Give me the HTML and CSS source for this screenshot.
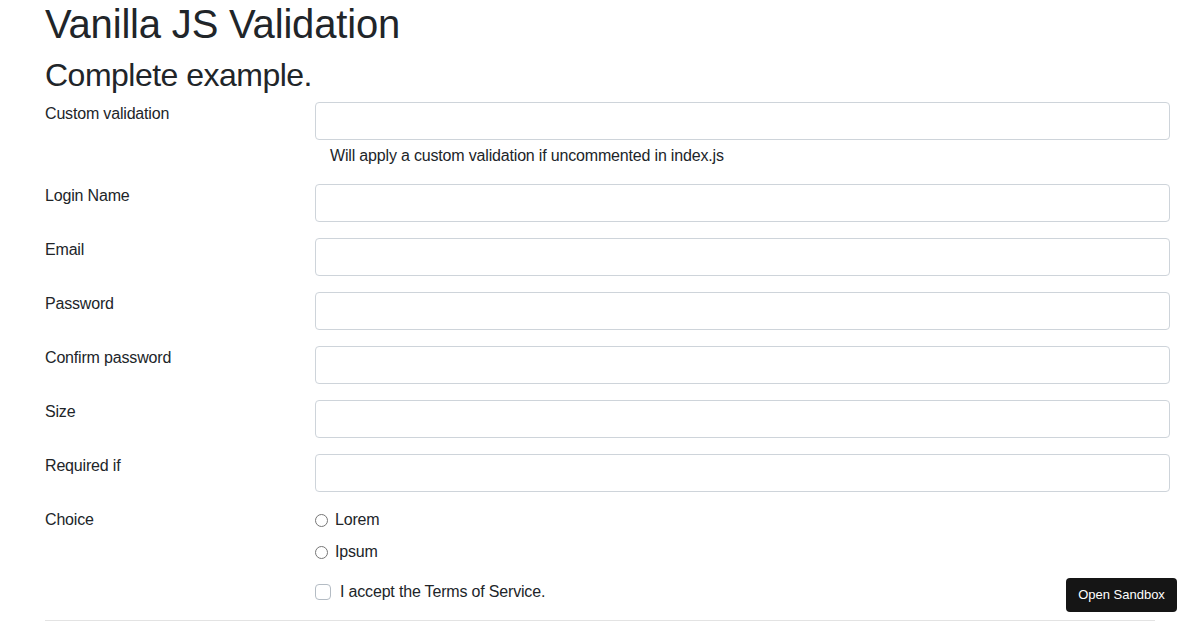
FILE: index.html
```html
<!DOCTYPE html>
<html lang="en">
<head>
<meta charset="utf-8">
<title>Vanilla JS Validation</title>
<link rel="stylesheet" href="styles.css">
</head>
<body>
<div class="container">
  <h1 class="title">Vanilla JS Validation</h1>
  <h2 class="subtitle">Complete example.</h2>
  <form class="form">
    <div class="row">
      <label class="label" for="custom">Custom validation</label>
      <div class="field">
        <input class="input" id="custom" type="text">
        <div class="help">Will apply a custom validation if uncommented in index.js</div>
      </div>
    </div>
    <div class="row">
      <label class="label" for="login">Login Name</label>
      <div class="field"><input class="input" id="login" type="text"></div>
    </div>
    <div class="row">
      <label class="label" for="email">Email</label>
      <div class="field"><input class="input" id="email" type="text"></div>
    </div>
    <div class="row">
      <label class="label" for="password">Password</label>
      <div class="field"><input class="input" id="password" type="password"></div>
    </div>
    <div class="row">
      <label class="label" for="confirm">Confirm password</label>
      <div class="field"><input class="input" id="confirm" type="password"></div>
    </div>
    <div class="row">
      <label class="label" for="size">Size</label>
      <div class="field"><input class="input" id="size" type="text"></div>
    </div>
    <div class="row">
      <label class="label" for="reqif">Required if</label>
      <div class="field"><input class="input" id="reqif" type="text"></div>
    </div>
    <div class="row">
      <div class="label">Choice</div>
      <div class="field choices">
        <label class="radio-line"><input class="radio" type="radio" name="choice"><span>Lorem</span></label>
        <label class="radio-line"><input class="radio" type="radio" name="choice"><span>Ipsum</span></label>
      </div>
    </div>
    <div class="row">
      <div class="label"></div>
      <div class="field">
        <label class="check-line"><input class="check" type="checkbox"><span>I accept the Terms of Service.</span></label>
      </div>
    </div>
  </form>
  <hr class="rule">
</div>
<button class="sandbox" type="button">Open Sandbox</button>
</body>
</html>
```
FILE: styles.css
```css
* { box-sizing: border-box; }
html, body { margin: 0; padding: 0; background: #fff; }
body {
  font-family: "Liberation Sans", Arial, sans-serif;
  font-size: 16px;
  line-height: 24px;
  color: #212529;
  letter-spacing: -0.011em;
}
.container {
  width: 1110px;
  margin: 0 auto;
}
.title {
  font-size: 40px;
  font-weight: 400;
  line-height: 48px;
  margin: 0 0 8px;
}
.subtitle {
  font-size: 32px;
  font-weight: 400;
  line-height: 38px;
  margin: 0 0 8px;
  letter-spacing: -0.016em;
}
.form { margin-right: -15px; }
.row {
  display: grid;
  grid-template-columns: 270px 1fr;
  margin-bottom: 16px;
}
.label { line-height: 24px; }
.input {
  display: block;
  width: 100%;
  height: 38px;
  border: 1px solid #ced4da;
  border-radius: 4px;
  background: #fff;
  font: inherit;
  padding: 6px 12px;
  margin: 0;
}
.help {
  margin-top: 4px;
  padding-left: 15px;
  line-height: 24px;
}
.choices {
  display: flex;
  flex-direction: column;
  gap: 8px;
}
.radio-line, .check-line {
  display: flex;
  align-items: center;
  height: 24px;
}
.radio {
  width: 13px;
  height: 13px;
  margin: 0 7px 0 0;
}
.check {
  appearance: none;
  -webkit-appearance: none;
  width: 16px;
  height: 16px;
  margin: 0 9px 0 0;
  border: 1px solid #b4bcc4;
  border-radius: 4px;
  background: #fff;
}
.rule {
  margin: 0;
  border: 0;
  border-top: 1px solid #e3e3e3;
}
.sandbox {
  position: fixed;
  right: 23px;
  bottom: 18px;
  width: 111px;
  height: 34px;
  padding: 0 0 1px;
  background: #151515;
  color: #fff;
  border: 0;
  border-radius: 4px;
  font-family: "Liberation Sans", Arial, sans-serif;
  font-size: 13px;
  letter-spacing: 0;
}
```
